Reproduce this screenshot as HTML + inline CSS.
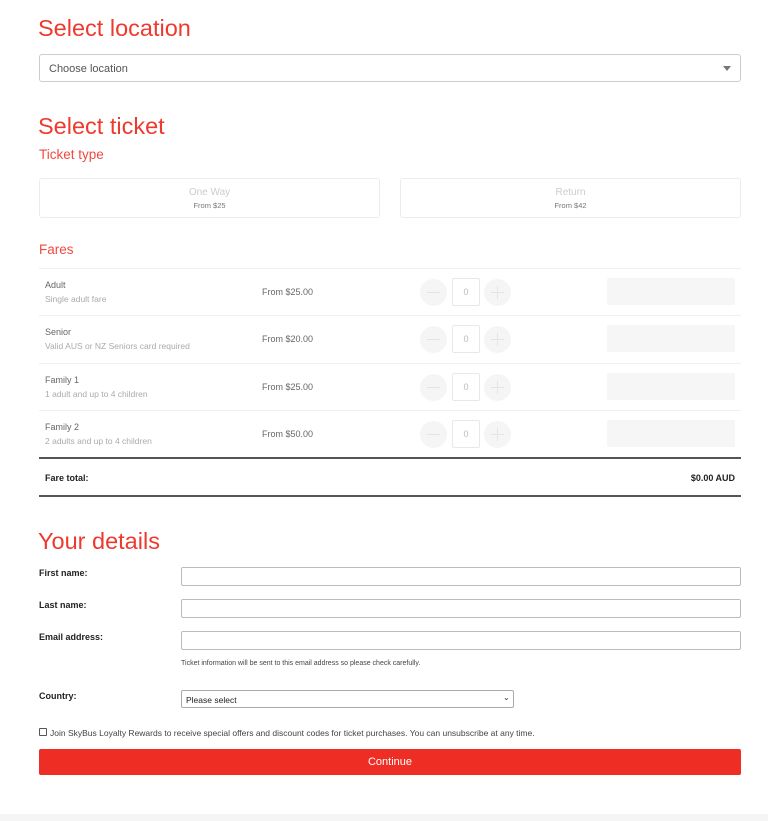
<!DOCTYPE html>
<html><head><meta charset="utf-8"><style>
*{margin:0;padding:0;box-sizing:border-box}
body{width:768px;height:821px;background:#fff;font-family:"Liberation Sans",Arial,sans-serif;position:relative;overflow:hidden;color:#333}
.a{position:absolute}
.h1{color:#ee3a2e;font-size:23.5px;line-height:1;left:38px}
.h2{color:#ee4a40;font-size:13.5px;line-height:1;left:39px}
.box{border:1px solid #ececec;border-radius:3px}
.line{left:39px;width:702px;height:1px;background:#efefef}
.t{font-size:9px;color:#666}
.s{font-size:8.5px;color:#aaa}
.circ{width:27px;height:27px;border-radius:50%;background:#f5f5f5}
.circ:before{content:"";position:absolute;left:7px;top:13px;width:13px;height:1px;background:#e4e4e4}
.plus:after{content:"";position:absolute;left:13px;top:7px;width:1px;height:13px;background:#e4e4e4}
.num{width:28px;height:28px;border:1px solid #e8e8e8;border-radius:2px;font-size:9px;color:#bbb;text-align:center;line-height:26px}
.gb{width:128px;height:27px;background:#f6f6f6;border-radius:2px;left:607px}
.lab{left:39px;font-size:9px;font-weight:bold;color:#222}
.inp{left:181px;width:560px;height:19px;border:1px solid #bbb;border-radius:2px}
</style></head><body>
<div class="a h1" style="top:17px">Select location</div>
<div class="a box" style="left:39px;top:54px;width:702px;height:28px;border-color:#ccc;"></div>
<div class="a" style="left:49px;top:63px;font-size:11px;color:#555">Choose location</div>
<div class="a" style="left:723px;top:66px;width:0;height:0;border-left:4px solid transparent;border-right:4px solid transparent;border-top:5px solid #777"></div>

<div class="a h1" style="top:115px">Select ticket</div>
<div class="a h2" style="top:148px">Ticket type</div>
<div class="a box" style="left:39px;top:178px;width:341px;height:40px"></div>
<div class="a" style="left:39px;top:187px;width:341px;text-align:center;font-size:10px;color:#ccc">One Way</div>
<div class="a" style="left:39px;top:201px;width:341px;text-align:center;font-size:7.5px;color:#777">From $25</div>
<div class="a box" style="left:400px;top:178px;width:341px;height:40px"></div>
<div class="a" style="left:400px;top:187px;width:341px;text-align:center;font-size:10px;color:#ccc">Return</div>
<div class="a" style="left:400px;top:201px;width:341px;text-align:center;font-size:7.5px;color:#777">From $42</div>

<div class="a h2" style="top:243px">Fares</div>
<div class="a line" style="top:268px"></div>
<div class="a line" style="top:315px"></div>
<div class="a line" style="top:363px"></div>
<div class="a line" style="top:410px"></div>

<div class="a t" style="left:45px;top:280px">Adult</div>
<div class="a s" style="left:45px;top:294px">Single adult fare</div>
<div class="a t" style="left:262px;top:287px">From $25.00</div>
<div class="a t" style="left:45px;top:327px">Senior</div>
<div class="a s" style="left:45px;top:341px">Valid AUS or NZ Seniors card required</div>
<div class="a t" style="left:262px;top:334px">From $20.00</div>
<div class="a t" style="left:45px;top:375px">Family 1</div>
<div class="a s" style="left:45px;top:389px">1 adult and up to 4 children</div>
<div class="a t" style="left:262px;top:382px">From $25.00</div>
<div class="a t" style="left:45px;top:422px">Family 2</div>
<div class="a s" style="left:45px;top:436px">2 adults and up to 4 children</div>
<div class="a t" style="left:262px;top:429px">From $50.00</div>

<div class="a circ" style="left:420px;top:279px"></div><div class="a num" style="left:452px;top:278px">0</div><div class="a circ plus" style="left:484px;top:279px"></div><div class="a gb" style="top:278px"></div>
<div class="a circ" style="left:420px;top:326px"></div><div class="a num" style="left:452px;top:325px">0</div><div class="a circ plus" style="left:484px;top:326px"></div><div class="a gb" style="top:325px"></div>
<div class="a circ" style="left:420px;top:374px"></div><div class="a num" style="left:452px;top:373px">0</div><div class="a circ plus" style="left:484px;top:374px"></div><div class="a gb" style="top:373px"></div>
<div class="a circ" style="left:420px;top:421px"></div><div class="a num" style="left:452px;top:420px">0</div><div class="a circ plus" style="left:484px;top:421px"></div><div class="a gb" style="top:420px"></div>

<div class="a" style="left:39px;top:457px;width:702px;height:2px;background:#555"></div>
<div class="a" style="left:45px;top:473px;font-size:9px;font-weight:bold;color:#222">Fare total:</div>
<div class="a" style="left:600px;width:135px;text-align:right;top:473px;font-size:9px;font-weight:bold;color:#222">$0.00 AUD</div>
<div class="a" style="left:39px;top:495px;width:702px;height:2px;background:#555"></div>

<div class="a h1" style="top:530px">Your details</div>
<div class="a lab" style="top:568px">First name:</div>
<div class="a inp" style="top:567px"></div>
<div class="a lab" style="top:600px">Last name:</div>
<div class="a inp" style="top:599px"></div>
<div class="a lab" style="top:632px">Email address:</div>
<div class="a inp" style="top:631px"></div>
<div class="a" style="left:181px;top:660px;font-size:7px;color:#444">Ticket information will be sent to this email address so please check carefully.</div>
<div class="a lab" style="top:691px">Country:</div>
<div class="a" style="left:181px;top:690px;width:333px;height:18px;border:1px solid #aaa;border-radius:2px"></div>
<div class="a" style="left:186px;top:695px;font-size:8.5px;color:#222">Please select</div>
<div class="a" style="left:503px;top:693px;font-size:8px;color:#333">&#8964;</div>
<div class="a" style="left:39px;top:728px;width:8px;height:8px;border:1px solid #555;border-radius:1px"></div>
<div class="a" style="left:50px;top:728px;font-size:8.5px;color:#444">Join SkyBus Loyalty Rewards to receive special offers and discount codes for ticket purchases. You can unsubscribe at any time.</div>
<div class="a" style="left:39px;top:749px;width:702px;height:26px;background:#ee2e24;border-radius:2px;color:#fff;font-size:11px;text-align:center;line-height:27px">Continue</div>
<div class="a" style="left:0;top:814px;width:768px;height:7px;background:#f5f5f5"></div>
</body></html>
